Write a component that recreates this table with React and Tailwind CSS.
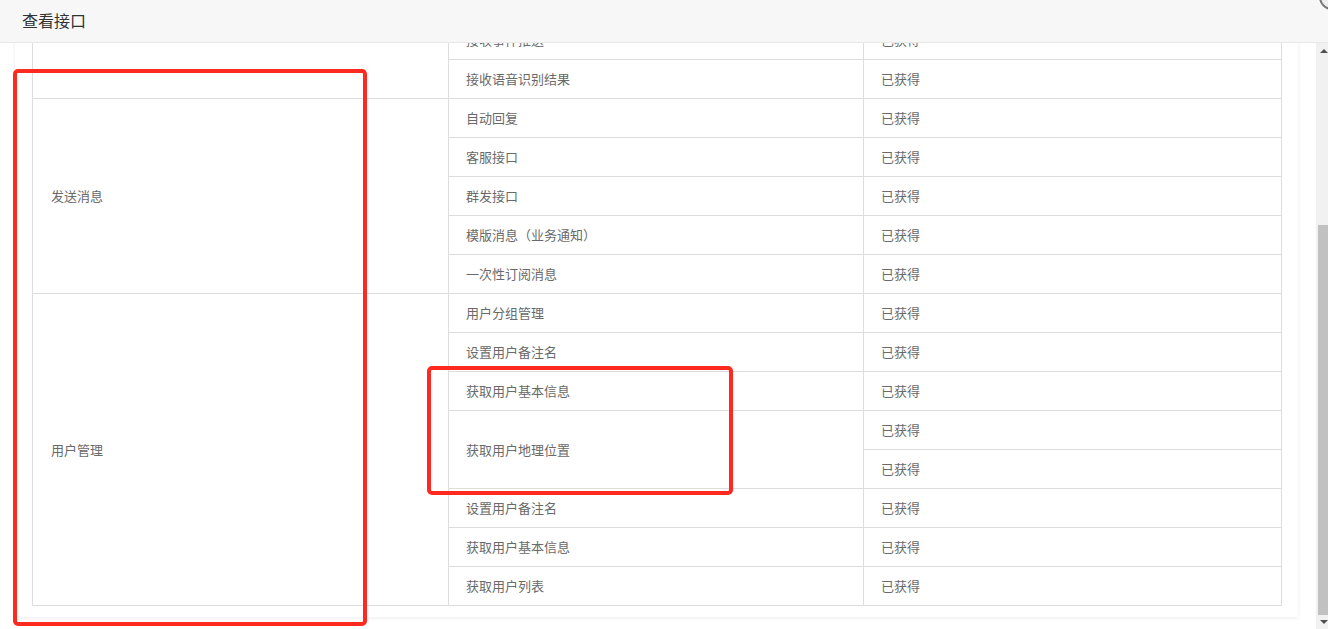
import React from "react";

const groups = [
  {
    name: "基础消息",
    rows: [
      { api: "验证消息真实性", status: ["已获得"] },
      { api: "接收普通消息", status: ["已获得"] },
      { api: "接收事件推送", status: ["已获得"] },
      { api: "接收语音识别结果", status: ["已获得"] },
    ],
  },
  {
    name: "发送消息",
    rows: [
      { api: "自动回复", status: ["已获得"] },
      { api: "客服接口", status: ["已获得"] },
      { api: "群发接口", status: ["已获得"] },
      { api: "模版消息（业务通知）", status: ["已获得"] },
      { api: "一次性订阅消息", status: ["已获得"] },
    ],
  },
  {
    name: "用户管理",
    rows: [
      { api: "用户分组管理", status: ["已获得"] },
      { api: "设置用户备注名", status: ["已获得"] },
      { api: "获取用户基本信息", status: ["已获得"] },
      { api: "获取用户地理位置", status: ["已获得", "已获得"] },
      { api: "设置用户备注名", status: ["已获得"] },
      { api: "获取用户基本信息", status: ["已获得"] },
      { api: "获取用户列表", status: ["已获得"] },
    ],
  },
];

const cellBase =
  "border-r border-b border-[#dddddd] flex items-center text-[13px] text-[#6a6a6a] whitespace-nowrap";

const spanClass = {
  1: "row-span-1",
  2: "row-span-2",
  4: "row-span-4",
  5: "row-span-5",
  8: "row-span-8",
};

function Table() {
  const cells = [];
  groups.forEach((g, gi) => {
    const total = g.rows.reduce((s, r) => s + r.status.length, 0);
    cells.push(
      <div
        key={`g${gi}`}
        className={`${cellBase} ${spanClass[total]} col-start-1 pl-[18px]`}
      >
        {g.name}
      </div>
    );
    g.rows.forEach((r, ri) => {
      cells.push(
        <div
          key={`a${gi}-${ri}`}
          className={`${cellBase} ${spanClass[r.status.length]} col-start-2 pl-[17px]`}
        >
          {r.api}
        </div>
      );
      r.status.forEach((s, si) => {
        cells.push(
          <div
            key={`s${gi}-${ri}-${si}`}
            className={`${cellBase} row-span-1 col-start-3 pl-[17px]`}
          >
            {s}
          </div>
        );
      });
    });
  });
  return (
    <div className="grid grid-cols-[416px_415px_418px] auto-rows-[39px] grid-flow-row-dense border-l border-t border-[#dddddd]">
      {cells}
    </div>
  );
}

export default function App() {
  return (
    <div
      className="relative w-[1328px] h-[629px] overflow-hidden bg-white"
      style={{ fontFamily: '"Microsoft YaHei", "Noto Sans CJK SC", "Noto Sans", sans-serif' }}
    >
      {/* header */}
      <div className="h-[43px] bg-[#f7f7f7] border-b border-[#e8e8e8] pl-[22px] pt-[8px]">
        <span className="text-[16px] leading-[22px] text-[#333333]">查看接口</span>
      </div>

      {/* body */}
      <div className="flex h-[586px]">
        <div className="flex-1 overflow-hidden">
          <div className="ml-[15px] mt-[-121px] w-[1283px] bg-white pt-[20px] pl-[17px] pr-[16px] pb-[11px] shadow-[0_1px_4px_rgba(0,0,0,0.08)]">
            <Table />
          </div>
        </div>
        {/* scrollbar */}
        <div className="relative w-[12px] h-full bg-[#f1f1f1]">
          <div className="absolute left-[4px] top-[6px] w-0 h-0 border-l-[4px] border-r-[4px] border-b-[4px] border-l-transparent border-r-transparent border-b-[#505050]" />
          <div className="absolute left-[2px] top-[182px] w-[10px] h-[390px] bg-[#c1c1c1]" />
          <div className="absolute left-[4px] top-[577px] w-0 h-0 border-l-[4px] border-r-[4px] border-t-[4px] border-l-transparent border-r-transparent border-t-[#505050]" />
        </div>
      </div>

      {/* close button edge */}
      <div className="absolute left-[1319px] top-[-16px] w-[26px] h-[26px] rounded-full border-2 border-[#777777] bg-[#eeeeee]" />

      {/* red annotation boxes */}
      <div className="absolute left-[13px] top-[69px] w-[354px] h-[557px] border-4 border-[#fe2a20] rounded-[5px]" />
      <div className="absolute left-[427px] top-[366px] w-[306px] h-[129px] border-4 border-[#fe2a20] rounded-[5px]" />
    </div>
  );
}
